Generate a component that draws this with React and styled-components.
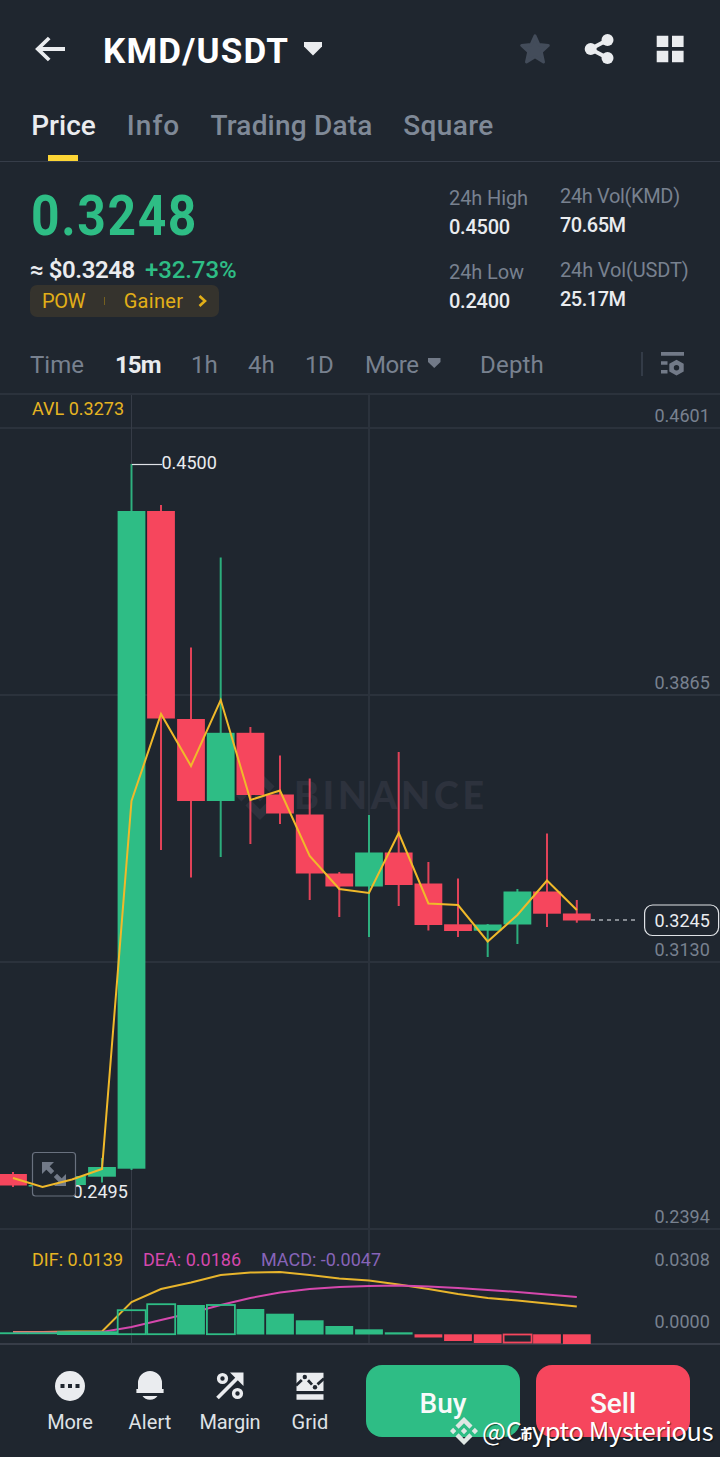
import React from "react";
import styled, { createGlobalStyle } from "styled-components";

const c = {
  bg: "#1f262f",
  line: "#2b323c",
  text: "#eaecef",
  dim: "#78818f",
  green: "#2ebd85",
  red: "#f6465d",
  avl: "#e6b422",
  pink: "#d548ad",
  purple: "#8764b8",
};

const Global = createGlobalStyle`
  * { box-sizing: border-box; }
  body { margin: 0; background: ${c.bg}; font-family: Roboto, "Liberation Sans", sans-serif; }
  svg { display: block; flex: none; }
`;

const Screen = styled.div`
  width: 720px;
  height: 1457px;
  display: flex;
  flex-direction: column;
  background: ${c.bg};
  color: ${c.text};
  overflow: hidden;
  white-space: nowrap;
`;

const Header = styled.header`
  height: 98px;
  display: flex;
  align-items: center;
  padding: 0 34px;
`;

const Title = styled.h1`
  margin: 5px 0 0 36px;
  width: 201px;
  font-size: 35px;
  font-weight: 700;
  letter-spacing: 1.2px;
  line-height: 40px;
  color: #fff;
`;

const Actions = styled.div`
  margin-left: auto;
  display: flex;
  align-items: center;
  gap: 32px;
`;

const Tabs = styled.nav`
  height: 64px;
  display: flex;
  gap: 31px;
  padding-left: 31px;
  border-bottom: 1px solid #363d49;
`;

const Tab = styled.div`
  display: flex;
  flex-direction: column;
  align-items: center;
  justify-content: space-between;
  width: ${(p) => p.$w}px;
  height: 63px;
  padding-top: 1px;
  font-size: 28px;
  font-weight: 500;
  line-height: 54px;
  letter-spacing: ${(p) => p.$track}px;
  color: ${(p) => (p.$active ? c.text : "#7f8997")};
`;

const Indicator = styled.i`
  width: 30px;
  height: 6px;
  margin-right: 1px;
  background: #fcd535;
`;

const Overview = styled.section`
  height: 176px;
  display: flex;
  padding: 0 30px;
`;

const Quote = styled.div`
  width: 419px;
  padding-top: 26px;
`;

const Price = styled.div`
  margin-left: 1px;
  font-size: 56px;
  font-weight: 700;
  line-height: 56px;
  letter-spacing: 1.8px;
  color: ${c.green};
  transform: scaleX(0.89);
  transform-origin: left;
`;

const SubPrice = styled.div`
  display: flex;
  gap: 10px;
  margin-top: 11px;
  font-size: 24px;
  line-height: 30px;
  font-weight: 500;
`;

const Fiat = styled.span`
  width: 105px;
  font-weight: 600;
  letter-spacing: -0.45px;
`;

const Change = styled.span`
  color: ${c.green};
  letter-spacing: -0.1px;
`;

const Badge = styled.div`
  display: flex;
  align-items: center;
  width: 189px;
  height: 32px;
  padding: 0 11px 0 12px;
  border-radius: 7px;
  background: #35332d;
  color: #e2af18;
  font-size: 20px;
`;

const BadgeRule = styled.i`
  width: 1px;
  height: 8px;
  margin: 0 19px 0 18px;
  background: #75601f;
`;

const BadgeText = styled.span`
  width: ${(p) => p.$w}px;
  letter-spacing: ${(p) => p.$track}px;
`;

const StatColumn = styled.div`
  width: 111px;
  padding-top: ${(p) => p.$top}px;
  display: flex;
  flex-direction: column;
  gap: 16px;
`;

const StatLabel = styled.div`
  font-size: 20px;
  line-height: 29px;
  letter-spacing: ${(p) => p.$track}px;
  color: ${c.dim};
`;

const StatValue = styled.div`
  font-size: 20px;
  line-height: 29px;
  font-weight: 500;
  letter-spacing: ${(p) => p.$track}px;
`;

const Intervals = styled.div`
  height: 54px;
  display: flex;
  align-items: center;
  padding: 0 35px 0 30px;
`;

const Interval = styled.span`
  width: ${(p) => p.$w}px;
  margin-right: ${(p) => p.$gap}px;
  font-size: 24px;
  letter-spacing: ${(p) => p.$track || 0}px;
  font-weight: ${(p) => (p.$active ? 700 : 400)};
  color: ${(p) => (p.$active ? c.text : c.dim)};
`;

const Caret = styled.svg`
  margin: -2px 39px 0 0;
`;

const IntervalRule = styled.i`
  width: 2px;
  height: 24px;
  margin: -3px 17px 0 auto;
  background: #333b47;
`;

const Footer = styled.footer`
  position: relative;
  height: 112px;
  display: flex;
  padding: 20px 30px 0;
`;

const Shortcut = styled.div`
  width: 80px;
  padding-top: 6px;
  display: flex;
  flex-direction: column;
  align-items: center;
  gap: 8px;
  font-size: 20px;
  line-height: 26px;
  letter-spacing: ${(p) => p.$track}px;
  color: #dfe2e6;
`;

const TradeButton = styled.button`
  width: 154px;
  height: 72px;
  margin-left: 16px;
  padding: 5px 0 0;
  border: 0;
  border-radius: 16px;
  background: ${(p) => p.$color};
  color: #f8fafa;
  font: 500 28px Roboto, sans-serif;
`;

const Author = styled.div`
  position: absolute;
  left: 450px;
  top: 69px;
  display: flex;
  align-items: center;
  gap: 4px;
  color: #fff;
  font: 400 25.4px/36px "Noto Sans CJK SC", sans-serif;
  text-shadow: 1px 1px 1px #0008;
`;

const AuthorName = styled.span`
  margin-top: -2px;
  letter-spacing: -0.35px;
`;

const Scrap = styled.span`
  position: absolute;
  left: 70px;
  top: 12px;
  font-size: 13px;
  font-weight: 700;
  line-height: 16px;
`;

const Num = styled.text`
  font-family: Roboto, sans-serif;
  font-size: 18px;
  fill: ${(p) => p.$fill || c.dim};
`;

const Watermark = styled.text`
  font-family: Lato, sans-serif;
  font-size: 37.5px;
  font-weight: 900;
  fill: #2d323d;
`;

const XS = [13, 42.5, 72, 102, 131.5, 161, 191, 220.7, 250.4, 280, 309.7, 339.3, 369, 398.7, 428.4, 458, 487.7, 517.4, 547, 576.8];

/* [rising, bodyTop, bodyBottom, high, low] for each interval */
const CANDLES = [
  [0, 1174, 1185.5, 1172, 1187],
  [1, 1185, 1186.5, 1184, 1187],
  [1, 1176, 1185, 1175, 1186],
  [1, 1167, 1176.7, 1158, 1182.5],
  [1, 511, 1168.7, 464, 1170],
  [0, 511, 718.5, 505, 850],
  [0, 719, 801, 647.5, 877.5],
  [1, 732.8, 801, 557.5, 857],
  [0, 732.8, 795, 727, 844],
  [0, 794.5, 813.5, 755.5, 824],
  [0, 814.5, 873.5, 778.5, 900],
  [0, 873.5, 886.5, 872, 917],
  [1, 852.5, 886.5, 815, 937],
  [0, 852.5, 885, 752, 906],
  [0, 883.5, 925, 862, 930.5],
  [0, 924.3, 931, 878.5, 937],
  [1, 924.5, 930.7, 924, 957],
  [1, 891.5, 924.5, 889, 944],
  [0, 891.5, 913.7, 833.5, 927],
  [0, 913.5, 920.5, 900, 922.7],
];

const AVL = [1178, 1187, 1179.5, 1169, 801, 714, 766, 700, 800, 790.5, 856, 889, 893, 833, 903.5, 905, 941.5, 915, 880.5, 910];
const DIF = [1332, 1332, 1331.5, 1331.5, 1302, 1289, 1282.5, 1275, 1272.5, 1272, 1275, 1278.5, 1280.5, 1284.5, 1289, 1294, 1298, 1300.5, 1303.5, 1306.5];
const DEA = [1332.5, 1332.5, 1332.5, 1332, 1327, 1320, 1313, 1305, 1298, 1292.5, 1289, 1287, 1286, 1285.5, 1286.5, 1288, 1290, 1292, 1294.5, 1297];

/* [rising, hollow, top, bottom] for each interval */
const HIST = [
  [1, 0, 1332.3, 1334.2],
  [1, 0, 1332.3, 1334.2],
  [1, 0, 1331.3, 1335],
  [1, 0, 1331.3, 1335],
  [1, 1, 1309.2, 1335.2],
  [1, 1, 1303.2, 1335.2],
  [1, 0, 1305, 1334.5],
  [1, 1, 1304, 1335.2],
  [1, 0, 1309, 1334.5],
  [1, 0, 1313.7, 1334.5],
  [1, 0, 1320.3, 1334.5],
  [1, 0, 1326, 1334.5],
  [1, 0, 1329.3, 1334.5],
  [1, 0, 1332.3, 1334.5],
  [0, 0, 1334.3, 1337.5],
  [0, 0, 1334.3, 1341],
  [0, 0, 1334.3, 1343],
  [0, 1, 1333.5, 1343.5],
  [0, 0, 1334.3, 1343.5],
  [0, 0, 1334.3, 1344],
];

const points = (ys) => ys.map((y, i) => `${XS[i]},${y}`).join(" ");

function Emblem({ size, color }) {
  return (
    <svg width={size} height={size} viewBox="0 0 24 24" fill={color}>
      <path d="M12 0l7.3 7.3-2.7 2.7L12 5.4 7.4 10 4.7 7.3z" />
      <path d="M12 24l7.3-7.3-2.7-2.7L12 18.6 7.4 14l-2.7 2.7z" />
      <path d="M2.7 9.3L5.4 12l-2.7 2.7L0 12zM21.3 9.3L24 12l-2.7 2.7-2.7-2.7zM12 9.3l2.7 2.7-2.7 2.7L9.3 12z" />
    </svg>
  );
}

function Chart() {
  return (
    <svg width="720" height="953" viewBox="0 392 720 953">
      <g fill={c.line}>
        <rect x="0" y="393" width="720" height="2" />
        {[427, 694, 961, 1228].map((y) => <rect key={y} x="0" y={y} width="720" height="2" />)}
        <rect x="131" y="395" width="1" height="949" fill="#363c47" />
        <rect x="368" y="395" width="2" height="949" />
        <rect x="0" y="1343" width="720" height="2" fill="#373d48" />
      </g>
      <g transform="translate(236 772)"><Emblem size={48} color="#2d323d" /></g>
      <Watermark x="294" y="809" textLength="190">BINANCE</Watermark>

      {CANDLES.map(([up, top, bottom, high, low], i) => (
        <g key={i} fill={up ? c.green : c.red}>
          <rect x={XS[i] - 1} y={high} width="2" height={low - high} opacity="0.9" />
          <rect x={XS[i] - 13.9} y={top} width="27.8" height={bottom - top} />
        </g>
      ))}

      <path d="M132 464.5H162" stroke="#dfe2e6" strokeWidth="1.2" />
      <Num x="161.5" y="469" $fill={c.text}>0.4500</Num>
      <Num x="72.5" y="1198" $fill={c.text}>0.2495</Num>
      <rect x="32.5" y="1152.5" width="43" height="43.5" rx="3" fill={c.bg} stroke="#69717f" strokeWidth="1.2" />
      <g fill="#727a88">
        <path d="M42 1162H54L42 1174Z" />
        <path d="M66 1186H54L66 1174Z" />
        <path d="M46 1166L52.6 1172.6M55.4 1175.4L62 1182" stroke="#727a88" strokeWidth="4.6" />
      </g>
      <polyline points={points(AVL)} fill="none" stroke="#f0b92a" strokeWidth="2" />

      <path d="M591 920H635.5" stroke="#a9adb4" strokeWidth="1.3" strokeDasharray="4 4" />
      <rect x="644.6" y="905" width="74" height="30.5" rx="8" fill={c.bg} stroke="#dfe2e6" strokeWidth="1.2" />
      <Num x="654.5" y="927" $fill={c.text}>0.3245</Num>

      <Num x="654.5" y="422">0.4601</Num>
      <Num x="654.5" y="689">0.3865</Num>
      <Num x="654.5" y="956">0.3130</Num>
      <Num x="654.5" y="1223">0.2394</Num>
      <Num x="654.5" y="1266">0.0308</Num>
      <Num x="654.5" y="1328">0.0000</Num>

      <Num x="32" y="415" $fill={c.avl} textLength="92">AVL 0.3273</Num>
      <Num x="32" y="1266" $fill={c.avl} textLength="91">DIF: 0.0139</Num>
      <Num x="143" y="1266" $fill={c.pink} textLength="98">DEA: 0.0186</Num>
      <Num x="261" y="1266" $fill={c.purple} textLength="120">MACD: -0.0047</Num>

      <g fill="none" strokeWidth="2">
        <polyline points={points(DIF)} stroke="#e8b52c" />
        <polyline points={points(DEA)} stroke={c.pink} />
      </g>
      {HIST.map(([up, hollow, top, bottom], i) => {
        const color = up ? c.green : c.red;
        return hollow ? (
          <rect key={i} x={XS[i] - 13.8} y={top + 1} width="28" height={bottom - top - 2} fill="none" stroke={color} strokeWidth="1.8" />
        ) : (
          <rect key={i} x={XS[i] - (i < 4 ? 15 : 13.9)} y={top} width={i < 4 ? 30 : 27.8} height={bottom - top} fill={color} />
        );
      })}
    </svg>
  );
}

export default function App() {
  return (
    <Screen>
      <Global />
      <Header>
        <svg width="33" height="30" viewBox="34 34 33 30" fill="none" stroke="#eaecef" strokeWidth="3.8">
          <path d="M65 49H38M49.2 38L37.8 49L49.2 60" />
        </svg>
        <Title>KMD/USDT</Title>
        <svg width="18" height="16" viewBox="0 0 18 16" fill="#eaecef">
          <path d="M0 1H18V5.5L9 14.5L0 5.5Z" />
        </svg>
        <Actions>
          <svg width="32" height="32" viewBox="0 0 32 32" fill="#434c5a" stroke="#434c5a" strokeWidth="3" strokeLinejoin="round">
            <path d="M16 2.8L19.8 11.4L29.3 12.5L22.3 18.9L24.5 29L16 23.7L7.5 29L9.7 18.9L2.7 12.5L12.2 11.4Z" />
          </svg>
          <svg width="32" height="32" viewBox="583 33 32 32" fill="#eaecef">
            <path d="M607.5 40L590.5 49L607.5 58" fill="none" stroke="#eaecef" strokeWidth="4" />
            <circle cx="590.7" cy="49" r="6" />
            <circle cx="607.5" cy="40" r="6" />
            <circle cx="607.5" cy="58" r="6" />
          </svg>
          <svg width="39" height="32" viewBox="647 33 39 32" fill="#eaecef">
            <path d="M656.7 35.7h11.6v11.4h-11.6zM672 35.7h11.6v11.4h-11.6zM656.7 50.8h11.6v11.4h-11.6zM672 50.8h11.6v11.4h-11.6z" />
          </svg>
        </Actions>
      </Header>
      <Tabs>
        <Tab $active $w={65} $track={0}>Price<Indicator /></Tab>
        <Tab $w={53} $track={1}>Info</Tab>
        <Tab $w={161} $track={0.2}>Trading Data</Tab>
        <Tab $w={91} $track={0.4}>Square</Tab>
      </Tabs>
      <Overview>
        <Quote>
          <Price>0.3248</Price>
          <SubPrice>
            <Fiat>≈ $0.3248</Fiat>
            <Change>+32.73%</Change>
          </SubPrice>
          <Badge>
            <BadgeText $w={44} $track={-0.3}>POW</BadgeText>
            <BadgeRule />
            <BadgeText $w={75} $track={0.3}>Gainer</BadgeText>
            <svg width="10" height="14" viewBox="0 0 10 14" fill="none" stroke="#e2af18" strokeWidth="2.6">
              <path d="M1.5 2L7 7L1.5 12" />
            </svg>
          </Badge>
        </Quote>
        <StatColumn $top={22}>
          <div><StatLabel $track={-0.1}>24h High</StatLabel><StatValue $track={-0.25}>0.4500</StatValue></div>
          <div><StatLabel $track={-0.1}>24h Low</StatLabel><StatValue $track={-0.25}>0.2400</StatValue></div>
        </StatColumn>
        <StatColumn $top={20}>
          <div><StatLabel $track={-0.35}>24h Vol(KMD)</StatLabel><StatValue $track={-0.5}>70.65M</StatValue></div>
          <div><StatLabel $track={-0.15}>24h Vol(USDT)</StatLabel><StatValue $track={-0.5}>25.17M</StatValue></div>
        </StatColumn>
      </Overview>
      <Intervals>
        <Interval $w={54} $gap={31}>Time</Interval>
        <Interval $w={46} $gap={30} $track={-0.9} $active>15m</Interval>
        <Interval $w={25} $gap={32}>1h</Interval>
        <Interval $w={26} $gap={31}>4h</Interval>
        <Interval $w={28} $gap={32} $track={-0.5}>1D</Interval>
        <Interval $w={54} $gap={9} $track={-0.4}>More</Interval>
        <Caret width="13" height="12" viewBox="0 0 13 12" fill="#727a88"><path d="M0 0H12.5V4L6.25 10L0 4Z" /></Caret>
        <Interval $w={65} $gap={0} $track={0.2}>Depth</Interval>
        <IntervalRule />
        <svg width="25" height="26" viewBox="660 352 25 26" fill="#727a88">
          <path d="M661 352h23v3.8h-23zM661 361.3h6.5v3.5h-6.5zM661 370h6.5v3.5h-6.5z" />
          <path fillRule="evenodd" d="M676.5 359.7l7.2 4v7.8l-7.2 4-7.2-4v-7.8zM676.5 365a2.7 2.7 0 1 0 0 5.4a2.7 2.7 0 1 0 0-5.4z" />
        </svg>
      </Intervals>
      <Chart />
      <Footer>
        <Shortcut $track={-0.2}>
          <svg width="30" height="30" viewBox="0 0 30 30">
            <circle cx="15" cy="15" r="15" fill="#eaecef" />
            <path d="M5.5 13h4v4h-4zM13 13h4v4h-4zM20.5 13h4v4h-4z" fill={c.bg} />
          </svg>
          More
        </Shortcut>
        <Shortcut $track={0.1}>
          <svg width="30" height="30" viewBox="0 0 30 30" fill="#eaecef">
            <path d="M3 18V12A12 12 0 0 1 27 12V18H28.6V22H1.4V18ZM7.5 25H22.5A8.5 7 0 0 1 7.5 25Z" />
          </svg>
          Alert
        </Shortcut>
        <Shortcut $track={-0.2}>
          <svg width="30" height="30" viewBox="0 0 30 30">
            <path d="M2.5 27L24 5.5" stroke="#eaecef" strokeWidth="3.8" />
            <path d="M15 1.5H28.5V15Z" fill="#eaecef" />
            <circle cx="7.5" cy="7.5" r="3.9" fill="none" stroke="#eaecef" strokeWidth="3.4" />
            <circle cx="22.5" cy="22.5" r="3.9" fill="none" stroke="#eaecef" strokeWidth="3.4" />
          </svg>
          Margin
        </Shortcut>
        <Shortcut $track={0.1}>
          <svg width="30" height="30" viewBox="0 0 30 30">
            <path d="M1.5 1.7h27v18.3h-27zM1.5 23.2h27v5.6h-27z" fill="#eaecef" />
            <path d="M1 14.5L6.8 9M13 9.3L17 13.6M22.5 13.4L29 7.5" stroke={c.bg} strokeWidth="2.8" />
            <circle cx="9.8" cy="6" r="2.2" fill={c.bg} />
            <circle cx="20" cy="16.3" r="2.2" fill={c.bg} />
          </svg>
          Grid
        </Shortcut>
        <TradeButton $color={c.green}>Buy</TradeButton>
        <TradeButton $color={c.red}>Sell</TradeButton>
        <Author>
          <Emblem size={28} color="#dfe7e4" />
          <AuthorName>@Crypto Mysterious</AuthorName>
          <Scrap>币</Scrap>
        </Author>
      </Footer>
    </Screen>
  );
}
